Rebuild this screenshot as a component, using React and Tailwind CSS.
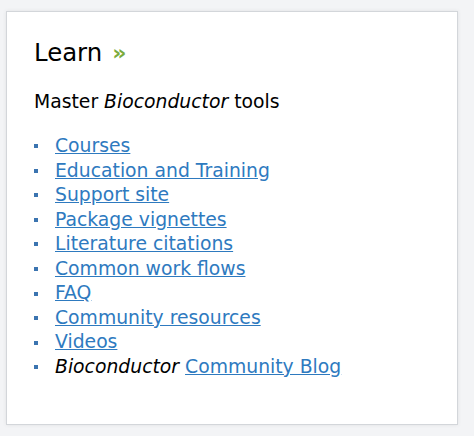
export default function App() {
  const links = [
    "Courses",
    "Education and Training",
    "Support site",
    "Package vignettes",
    "Literature citations",
    "Common work flows",
    "FAQ",
    "Community resources",
    "Videos",
  ];
  return (
    <div className="w-[474px] h-[436px] bg-[#f3f4f6] pt-[11px] pl-[6px] font-['DejaVu_Sans',Verdana,sans-serif] text-black">
      <div className="w-[452px] h-[414px] bg-white border border-[#d3d6da] shadow-[0_0_4px_rgba(0,0,0,0.08)] pl-[27px] pt-[26px]">
        <h2 className="text-[24.4px] leading-[30px] flex items-center">
          Learn
          <span className="ml-[10px] text-[#7aab3c] font-bold text-[22px] leading-none">»</span>
        </h2>
        <p className="mt-[22px] text-[18.8px] leading-[24px]">
          Master <i>Bioconductor</i> tools
        </p>
        <ul className="mt-[20px] text-[18.8px] leading-[24.55px]">
          {links.map((l) => (
            <li key={l} className="flex items-center">
              <span className="w-[4px] h-[4px] bg-[#3b74b0] mr-[17px] shrink-0" />
              <a href="#" className="text-[#2e7abf] underline">{l}</a>
            </li>
          ))}
          <li className="flex items-center">
            <span className="w-[4px] h-[4px] bg-[#3b74b0] mr-[17px] shrink-0" />
            <span>
              <i>Bioconductor</i>{" "}
              <a href="#" className="text-[#2e7abf] underline">Community Blog</a>
            </span>
          </li>
        </ul>
      </div>
    </div>
  );
}
